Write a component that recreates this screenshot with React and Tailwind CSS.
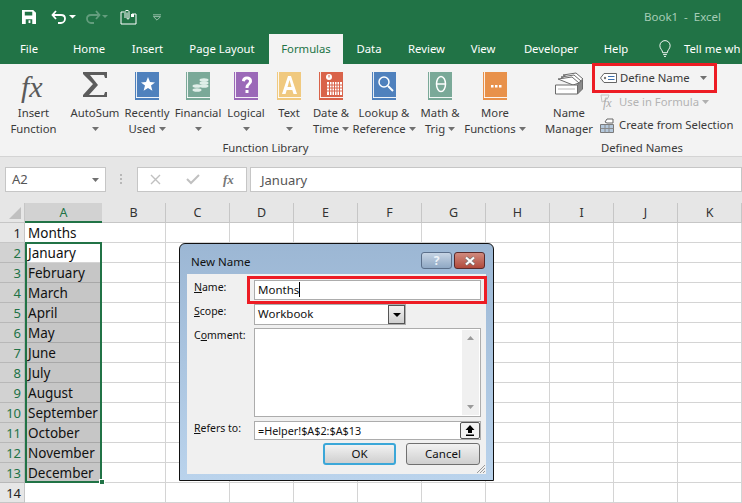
import React from "react";

const F = '[font-family:"Noto_Sans",sans-serif]';

function Caret({ className = "" }) {
  return <svg width="7" height="4" viewBox="0 0 7 4" className={"inline-block " + className}><path d="M0 0h7L3.5 4z" fill="#707070" /></svg>;
}

function Book({ color, children }) {
  return (
    <svg width="24" height="28" viewBox="0 0 24 28" className="block">
      <rect width="24" height="28" fill={color} />
      <rect x="1" y="0" width="1" height="26" fill="#fff" opacity=".85" />
      <rect x="1" y="25" width="23" height="1" fill="#fff" opacity=".9" />
      {children}
    </svg>
  );
}

const FxIcon = () => (
  <svg width="26" height="36" viewBox="0 0 26 36" className="-mt-[3px]"><text x="0" y="28" fontFamily="Liberation Serif" fontStyle="italic" fontSize="30" fill="#5a5a5a">fx</text></svg>
);
const SigmaIcon = () => (
  <svg width="25" height="28" viewBox="0 0 25 28"><path d="M0 0h24v6h-2l-1-3H7l8 10-9 10h15l1-3h2v5H0v-2l10-11L0 2z" fill="#5c5c5c" /></svg>
);

const big = [
  { w: "w-[52px]", a: "AutoSum", b: null, icon: <SigmaIcon /> },
  { w: "w-[52px]", a: "Recently", b: "Used", icon: <Book color="#4f81bd"><path d="M13 5l2 5 5 .4-4 3.2 1.4 5.2L13 16l-4.400 2.800L10 13.600 6 10.400l5-.4z" fill="#fff" /></Book> },
  { w: "w-[50px]", a: "Financial", b: null, icon: <Book color="#7aa998"><g fill="#dfeee8"><ellipse cx="18" cy="8" rx="4.500" ry="1.800" /><ellipse cx="18" cy="11" rx="4.500" ry="1.800" /><ellipse cx="18" cy="14" rx="4.500" ry="1.800" /><ellipse cx="11" cy="14" rx="4.500" ry="1.800" /><ellipse cx="11" cy="18" rx="4.500" ry="1.800" /></g></Book> },
  { w: "w-[46px]", a: "Logical", b: null, icon: <Book color="#9b69b8"><path d="M8 9c0-3 2-4.500 5-4.500s5 1.500 5 4.500c0 3.500-3.500 3.500-3.500 7h-3c0-4.500 3.500-4.500 3.500-7 0-1-1-1.500-2-1.500s-2 .5-2 2zM11.500 18h3v3h-3z" fill="#fff" /></Book> },
  { w: "w-[40px]", a: "Text", b: null, icon: <Book color="#f0c97f"><path d="M11 4h3l6 18h-3.500l-1.200-4H9.700l-1.200 4H5zm1.500 4l-2 7h4z" fill="#fff" /></Book> },
  { w: "w-[44px] mr-[4px]", a: "Date &", b: "Time", icon: <Book color="#d9634a"><circle cx="10" cy="5" r="3" fill="#fff" /><rect x="9.500" y="3" width="1" height="2.500" fill="#d9634a" /><path d="M8 10h15v13H8z" fill="#fff" /><path d="M10.500 10v13M13 10v13M15.500 10v13M18 10v13M20.500 10v13M8 13h15M8 16h15M8 19h15" stroke="#d9634a" strokeWidth="1" /></Book> },
  { w: "w-[54px]", a: "Lookup &", b: "Reference", icon: <Book color="#4f81bd"><circle cx="12" cy="10" r="5" fill="none" stroke="#fff" strokeWidth="1.500" /><path d="M16 14l5 5" stroke="#fff" strokeWidth="2" /></Book> },
  { w: "w-[58px]", a: "Math &", b: "Trig", icon: <Book color="#7aa998"><ellipse cx="13" cy="12" rx="4.500" ry="7.500" fill="none" stroke="#fff" strokeWidth="1.500" /><path d="M9 12h8" stroke="#fff" strokeWidth="1.500" /></Book> },
  { w: "w-[52px]", a: "More", b: "Functions", icon: <Book color="#e8914a"><path d="M8 13h2.500v2.500H8zM12 13h2.500v2.500H12zM16 13h2.500v2.500H16z" fill="#fff" /></Book> },
];

function BigButton({ w, a, b, icon, caret = true }) {
  return (
    <div className={`${w} shrink-0 flex flex-col items-center h-full`}>
      <div className="h-[28px] mt-[8px] flex items-center justify-center">{icon}</div>
      <div className="mt-[5px] h-[16px] leading-[16px] whitespace-nowrap">{a}</div>
      <div className="h-[16px] leading-[16px] whitespace-nowrap flex items-center gap-[3px]">
        {b}{caret && <Caret />}
      </div>
    </div>
  );
}

const tabs = [
  ["File", "w-[58px]"], ["Home", "w-[62px]"], ["Insert", "w-[55px]"], ["Page Layout", "w-[94px]"],
  ["Formulas", "w-[74px]"], ["Data", "w-[52px]"], ["Review", "w-[63px]"], ["View", "w-[50px]"],
  ["Developer", "w-[86px]"], ["Help", "w-[44px]"],
];

const cols = ["A", "B", "C", "D", "E", "F", "G", "H", "I", "J", "K"];
const months = ["Months", "January", "February", "March", "April", "May", "June", "July", "August", "September", "October", "November", "December", ""];

function Row({ n, text }) {
  const sel = n >= 2 && n <= 13;
  const shaded = n >= 3 && n <= 13;
  return (
    <div className="flex h-[20px]">
      <div className={`w-[25px] shrink-0 pr-[3px] text-right text-[13px] leading-[21px] border-b border-r ${sel ? "bg-[#d2d2d2] text-[#217346] border-[#b8b8b8]" : "bg-[#e6e6e6] text-[#222] border-[#c6c6c6]"}`}>{n}</div>
      <div className={`w-[77px] shrink-0 pl-[3px] text-[13.500px] leading-[21px] whitespace-nowrap border-b ${shaded ? "bg-[#c6c6c6] border-[#a8a8a8] text-[#111]" : "bg-white border-[#d4d4d4] text-[#111]"}`}>{text}</div>
      {cols.slice(1).map((c) => (
        <div key={c} className="w-[64px] shrink-0 border-r border-b border-[#d4d4d4]" />
      ))}
    </div>
  );
}

function TitleBtn({ children, className }) {
  return <div className={`h-[17px] rounded-[3px] border flex items-center justify-center ${className}`}>{children}</div>;
}

function Field({ u, pre = "", rest, h, children }) {
  return (
    <div className="flex" style={{ height: h }}>
      <div className="w-[67px] shrink-0 pl-[7px] text-[10.500px] leading-[14px] text-[#111] whitespace-nowrap">
        {pre}<span className="underline">{u}</span>{rest}
      </div>
      {children}
    </div>
  );
}

export default function App() {
  return (
    <div className={`relative w-[742px] h-[503px] overflow-hidden bg-white text-[11.300px] text-[#3a3a3a] ${F}`}>
      {/* title bar */}
      <div className="h-[64px] bg-[#217346] flex flex-col">
        <div className="h-[34px] flex items-center relative">
          <div className="flex items-center pl-[22px]">
            <svg width="14" height="14" viewBox="0 0 15 15"><path d="M0 0h12l3 3v12H0z" fill="#fff" /><path d="M3 2h8v4H3zM4 10h7v5H4z" fill="#217346" /><path d="M7 11h2v3H7z" fill="#fff" /></svg>
            <svg width="25" height="14" viewBox="0 0 25 14" className="ml-[15px]"><path d="M5 1L1.500 5 5 9M2 5h8c3 0 4 2 4 3.500S13 13 10 13H7" fill="none" stroke="#fff" strokeWidth="1.800" /><path d="M18 5h7l-3.500 3.500z" fill="#fff" /></svg>
            <svg width="25" height="14" viewBox="0 0 25 14" className="opacity-50 ml-[10px]"><path d="M10 1l3.500 4L10 9M13 5H5C2 5 1 7 1 8.500S2 13 5 13h3" fill="none" stroke="#a5c8b5" strokeWidth="1.800" /><path d="M16 5h6l-3 3z" fill="#a5c8b5" /></svg>
            <svg width="17" height="16" viewBox="0 0 17 16" className="ml-[9px]"><path d="M4 3H1v12h15V5h-4" fill="none" stroke="#fff" /><path d="M5 9V2.500C5 1 9 1 9 2.500V9c0 1.500-2 1.500-2 0V3.500" fill="none" stroke="#fff" /><path d="M11 5h3v3h-3z" fill="#fff" /></svg>
            <svg width="8" height="7" viewBox="0 0 9 7" className="ml-[16px]"><path d="M0 .5h9M.5 2.500h8L4.500 6.500z" fill="none" stroke="#a5c8b5" /></svg>
          </div>
          <div className="absolute left-[644px] top-[8px] text-[11.500px] text-[#a5cdb6] whitespace-pre">Book1  -  Excel</div>
        </div>
        <div className="h-[30px] flex items-stretch whitespace-nowrap text-white overflow-hidden">
          {tabs.map(([t, w]) => (
            <div key={t} className={`${w} shrink-0 flex items-center justify-center ${t === "Formulas" ? "bg-[#f3f3f3] text-[#217346]" : ""}`}>{t}</div>
          ))}
          <svg width="14" height="18" viewBox="0 0 15 18" className="shrink-0 ml-[20px] mr-[12px] self-center"><path d="M5 13c0-3-3-4-3-7.500a5.500 5.500 0 0111 0C13 9 10 10 10 13zM5.500 15h4M6.500 17h2" fill="none" stroke="#fff" /></svg>
          <div className="shrink-0 flex items-center">Tell me wh</div>
        </div>
      </div>

      {/* ribbon */}
      <div className="h-[93px] bg-[#f3f3f3] border-b border-[#d4d4d4] flex relative">
        <div className="w-[64px] shrink-0 flex flex-col items-center pl-[3px]">
          <div className="h-[28px] mt-[8px]"><FxIcon /></div>
          <div className="mt-[5px] h-[16px] leading-[16px]">Insert</div>
          <div className="h-[16px] leading-[16px]">Function</div>
        </div>
        <div className="w-px h-[55px] mt-[10px] bg-[#c6c6c6]" />
        <div className="w-[5px] shrink-0" />
        <div className="relative flex w-[452px] shrink-0">
          {big.map((b) => <BigButton key={b.a} {...b} />)}
          <div className="absolute bottom-[0px] left-[0px] right-[0px] h-[16px] leading-[16px] text-center pr-[59px] whitespace-nowrap">
            Function Library
          </div>
        </div>
        <div className="w-[14px] shrink-0" />
        <div className="w-px h-[84px] mt-[4px] bg-[#c6c6c6]" />
        <div className="w-[9px] shrink-0" />
        <div className="relative flex shrink-0">
          <div className="w-[47px] shrink-0 flex flex-col items-center pl-[3px]">
            <div className="h-[28px] mt-[8px]">
              <svg width="29" height="25" viewBox="0 0 29 25" fill="#fff" stroke="#6a6a6a"><path d="M8 3l13-2 7 6-4 3z" /><path d="M6 5l13-2 7 6-4 3z" /><path d="M3 7l14-2 7 6-6 2z" /><path d="M.5 13h22v9H.5z" /><path d="M22.500 13l5-5v9l-5 5z" fill="#8a8a8a" /><path d="M3 16h17v2H3z" fill="#ddd" stroke="none" /></svg>
            </div>
            <div className="mt-[5px] h-[16px] leading-[16px]">Name</div>
            <div className="h-[16px] leading-[16px]">Manager</div>
          </div>
          <div className="relative ml-[1px] w-[150px]">
            <div className="w-[125px] h-[30px] -mt-[1px] border-[3px] border-[#ed1c24] flex items-center pl-[5px] whitespace-nowrap">
              <svg width="17" height="10" viewBox="0 0 17 10" className="mr-[3px]"><path d="M4 .5h12.500v9H4L.5 5z" fill="#fff" stroke="#666" /><circle cx="5" cy="5" r="1.200" fill="#777" /><path d="M8 3.500h6.500M8 6.500h6.500" stroke="#3a6fb0" /></svg>
              <span>Define Name</span>
              <Caret className="ml-[10px]" />
            </div>
            <div className="h-[22px] -mt-[2px] pl-[8px] flex items-center whitespace-nowrap text-[#b4b4b4]">
              <svg width="16" height="16" viewBox="0 0 16 16" className="mr-[3px]"><path d="M1 1h8l-1 3-3 0 1 2-4 2z" fill="none" stroke="#c4c4c4" /><text x="3" y="13" fontFamily="Liberation Serif" fontStyle="italic" fontSize="12" fill="#aaa">fx</text></svg>
              <span>Use in Formula</span>
              <Caret className="ml-[3px] opacity-50" />
            </div>
            <div className="h-[24px] pl-[8px] flex items-center whitespace-nowrap">
              <svg width="15" height="15" viewBox="0 0 15 15" className="mr-[4px]"><path d="M.5 6.500h13v8H.5z" fill="#b4c8dc" stroke="#7a7a7a" /><path d="M.5 10.500h13M5 6.500v8M9 6.500v8" stroke="#8a8a8a" /><path d="M5 4l2-3h6v4H7z" fill="#fff" stroke="#666" /></svg>
              <span>Create from Selection</span>
            </div>
          </div>
          <div className="absolute left-[0px] right-[0px] bottom-[0px] h-[16px] leading-[16px] pl-[57px] whitespace-nowrap">Defined Names</div>
        </div>
      </div>

      {/* formula bar */}
      <div className="h-[46px] bg-[#e6e6e6] flex pt-[10px] pl-[5px]">
        <div className="w-[101px] h-[25px] bg-white border border-[#c6c6c6] flex items-center justify-between pl-[6px] pr-[6px] text-[#555] text-[13px]">
          A2<Caret />
        </div>
        <div className="w-[31px] h-[25px] flex items-center justify-center">
          <svg width="3" height="11" viewBox="0 0 3 11"><path d="M0 0h2v2H0zM0 4h2v2H0zM0 8h2v2H0z" fill="#b8b8b8" /></svg>
        </div>
        <div className="w-[110px] h-[25px] bg-white border border-[#c6c6c6] flex items-center pl-[12px]">
          <svg width="11" height="11" viewBox="0 0 11 11"><path d="M1 1l9 9M10 1l-9 9" stroke="#c0c0c0" strokeWidth="1.400" /></svg>
          <svg width="14" height="11" viewBox="0 0 14 11" className="ml-[25px]"><path d="M1 5l4 4 8-8" fill="none" stroke="#c0c0c0" strokeWidth="2" /></svg>
          <span className="ml-[23px] text-[13px] font-bold italic text-[#777] [font-family:'Liberation_Serif',serif]">fx</span>
        </div>
        <div className="ml-[3px] flex-1 h-[25px] bg-white border border-[#c6c6c6] pl-[10px] leading-[25px] text-[13px] text-[#555]">January</div>
      </div>

      {/* sheet */}
      <div className="relative">
        <div className="flex h-[20px]">
          <div className="w-[25px] shrink-0 bg-[#e6e6e6] border-r border-b border-[#c6c6c6] relative overflow-hidden">
            <svg width="13" height="13" viewBox="0 0 13 13" className="absolute right-[2px] bottom-[2px]"><path d="M12 0v12H0z" fill="#c0c0c0" /></svg>
          </div>
          {cols.map((c, i) => (
            <div key={c} className={`shrink-0 text-center text-[12.500px] leading-[20px] ${i === 0 ? "w-[77px] bg-[#d2d2d2] text-[#217346] border-b-2 border-[#217346]" : "w-[64px] bg-[#e6e6e6] text-[#333] border-r border-b border-[#c6c6c6]"}`}>{c}</div>
          ))}
        </div>
        {months.map((m, i) => <Row key={i} n={i + 1} text={m} />)}

        {/* selection */}
        <div className="absolute left-[25px] top-[39px] w-[77px] h-[241px] border-2 border-[#217346] pointer-events-none" />
        <div className="absolute left-[99px] top-[276px] w-[6px] h-[6px] bg-[#217346] border border-white" />

        {/* dialog */}
        <div className="absolute left-[179px] top-[40px] w-[315px] h-[238px] rounded-t-[6px] border border-[#111] bg-gradient-to-b from-[#9cb7d4] to-[#bad3ec] px-[7px] pb-[6px] flex flex-col text-[#111]">
          <div className="h-[30px] shrink-0 flex items-center pt-[6px]">
            <span className="ml-[4px] text-[11.500px]">New Name</span>
            <div className="ml-auto mr-[1px] -mt-[3px] flex gap-[2px]">
              <TitleBtn className="w-[31px] border-[#5b6f8a] bg-gradient-to-b from-[#c6d4e4] to-[#8fa8c4] text-[#eef3f8] text-[12px] font-bold">?</TitleBtn>
              <TitleBtn className="w-[31px] border-[#5a2a2a] bg-gradient-to-b from-[#d08a7e] to-[#b04a3c]">
                <svg width="14" height="10" viewBox="0 0 14 10"><path d="M3 1.500l8 7M11 1.500l-8 7" stroke="#777" strokeWidth="3.600" /><path d="M3 1.500l8 7M11 1.500l-8 7" stroke="#fff" strokeWidth="2.200" /></svg>
              </TitleBtn>
            </div>
          </div>
          <div className="flex-1 bg-[#f0f0f0] pt-[6px] flex flex-col relative text-[11.500px]">
            <Field u="N" rest="ame:" h={24}>
              <div className="w-[227px] h-[20px] bg-white border border-[#acacac] pl-[3px] leading-[18px]">Months<span className="border-r border-black" /></div>
            </Field>
            <div className="absolute left-[60px] top-[2px] w-[240px] h-[28px] border-[3px] border-[#ed1c24]" />
            <Field u="S" rest="cope:" h={24}>
              <div className="w-[152px] h-[21px] bg-white border border-[#acacac] pl-[3px] leading-[17px] flex justify-between">
                Workbook
                <div className="w-[17px] h-[19px] bg-gradient-to-b from-[#f2f2f2] to-[#cfcfcf] border border-[#555] flex items-center justify-center">
                  <svg width="8" height="4" viewBox="0 0 8 4"><path d="M0 0h8L4 4z" fill="#000" /></svg>
                </div>
              </div>
            </Field>
            <Field pre="C" u="o" rest="mment:" h={93}>
              <div className="w-[227px] h-[89px] bg-white border border-[#acacac] flex justify-end p-px">
                <div className="w-[17px] bg-[#f0f0f0] flex flex-col justify-between items-center py-[6px]">
                  <svg width="7" height="4" viewBox="0 0 7 4"><path d="M0 4h7L3.500 0z" fill="#9a9a9a" /></svg>
                  <svg width="7" height="4" viewBox="0 0 7 4"><path d="M0 0h7L3.500 4z" fill="#9a9a9a" /></svg>
                </div>
              </div>
            </Field>
            <Field u="R" rest="efers to:" h={22}>
              <div className="w-[227px] h-[19px] bg-white border border-[#acacac] pl-[3px] text-[10.800px] leading-[17px] flex justify-between">
                =Helper!$A$2:$A$13
                <div className="w-[20px] h-[17px] bg-[#f4f4f4] border border-[#555] rounded-[2px] flex items-center justify-center">
                  <svg width="10" height="11" viewBox="0 0 10 11"><path d="M5 0l4.500 5H7v3H3V5H.5zM1 9.500h8V11H1z" fill="#000" /></svg>
                </div>
              </div>
            </Field>
            <div className="flex justify-end gap-[10px] pr-[6px]">
              <div className="w-[73px] h-[22px] rounded-[3px] border-2 border-[#3ba7d8] bg-gradient-to-b from-[#f2f2f2] to-[#cfcfcf] text-center leading-[18px]">OK</div>
              <div className="w-[74px] h-[22px] rounded-[3px] border border-[#707070] bg-gradient-to-b from-[#f2f2f2] to-[#cfcfcf] text-center leading-[20px]">Cancel</div>
            </div>
            <svg width="10" height="10" viewBox="0 0 10 10" className="absolute right-[0px] bottom-[0px]"><path d="M9 1L1 9M9 4L4 9M9 7L7 9" stroke="#9a9a9a" /></svg>
          </div>
        </div>
      </div>
    </div>
  );
}
